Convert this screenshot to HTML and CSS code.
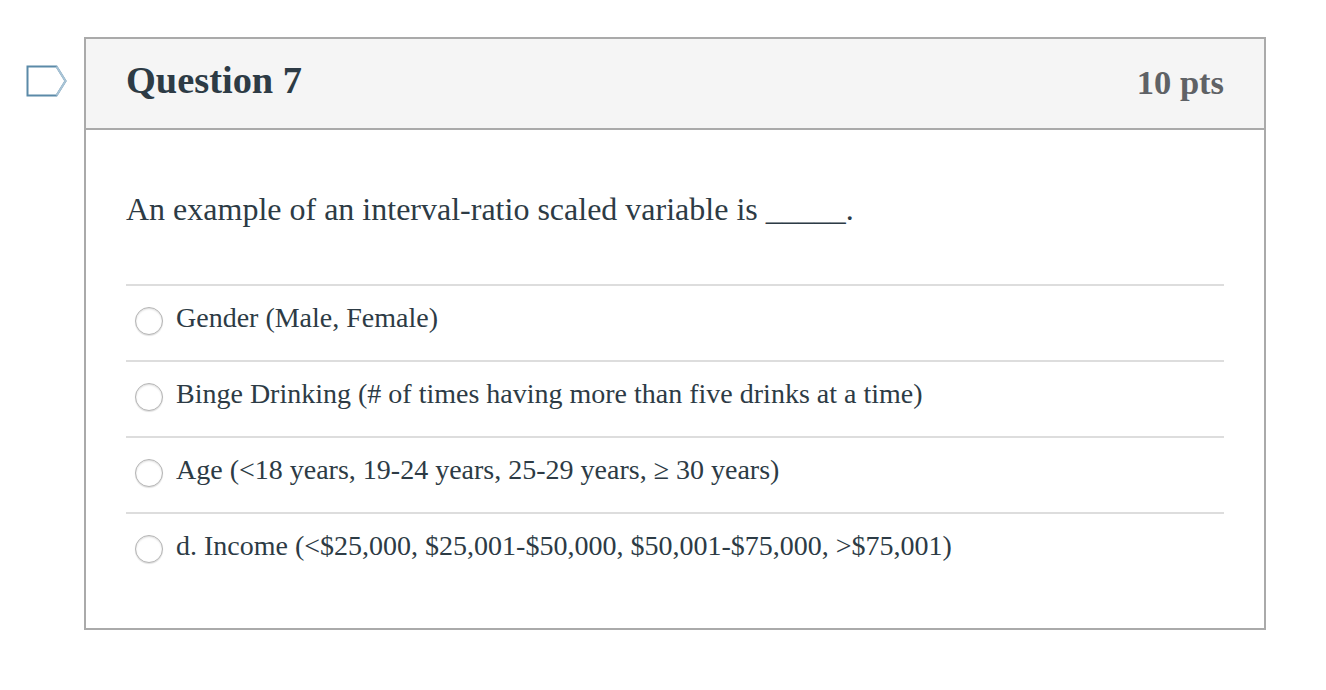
FILE: index.html
```html
<!DOCTYPE html>
<html lang="en">
<head>
    <meta charset="utf-8" />
    <meta name="viewport" content="width=device-width, initial-scale=1.0">
    <link rel="stylesheet" href="styles.css">
    <title>Question 7</title>
</head>
<body>
    <div class="question-row">
        <svg class="flag" width="42" height="34" viewBox="0 0 42 34">
            <path d="M1.5 2.5H30.5L39.5 17L30.5 31.5H1.5Z" fill="#fff" stroke="#5b8aa8" stroke-width="2"/>
            <path d="M30.5 2.5L39.5 17L30.5 31.5" fill="none" stroke="#a9c4d6" stroke-width="2"/>
        </svg>
        <div class="question">
            <div class="question-header">
                <h2>Question 7</h2>
                <span class="pts">10 pts</span>
            </div>
            <div class="question-body">
                <p class="prompt">An example of an interval-ratio scaled variable is _____.</p>
                <div class="answers">
                    <div class="answer"><span class="radio"></span><span>Gender (Male, Female)</span></div>
                    <div class="answer"><span class="radio"></span><span>Binge Drinking (# of times having more than five drinks at a time)</span></div>
                    <div class="answer"><span class="radio"></span><span>Age (&lt;18 years, 19-24 years, 25-29 years, ≥ 30 years)</span></div>
                    <div class="answer"><span class="radio"></span><span>d. Income (&lt;$25,000, $25,001-$50,000, $50,001-$75,000, &gt;$75,001)</span></div>
                </div>
            </div>
        </div>
    </div>
</body>
</html>
```

FILE: styles.css
```css
body {
    margin: 0;
    background-color: #fff;
    font-family: "Liberation Serif", "Times New Roman", serif;
    color: #2d3b45;
}

.question-row {
    display: flex;
    align-items: flex-start;
    padding: 37px 60px 0 26px;
}

.flag {
    margin-top: 27px;
    margin-right: 16px;
    flex: none;
}

.question {
    width: 1182px;
    height: 593px;
    box-sizing: border-box;
    border: 2px solid #aaa;
}

.question-header {
    display: flex;
    justify-content: space-between;
    align-items: center;
    height: 91px;
    box-sizing: border-box;
    padding: 0 40px;
    background-color: #f5f5f5;
    border-bottom: 2px solid #aaa;
}

.question-header h2 {
    margin: 0 0 8px;
    font-size: 38.4px;
    font-weight: bold;
}

.pts {
    margin-bottom: 2px;
    font-size: 34.5px;
    font-weight: bold;
    color: #5f6266;
}

.question-body {
    padding: 0 40px;
}

.prompt {
    margin: 0;
    padding-top: 59px;
    height: 95px;
    font-size: 32px;
    line-height: 40px;
}

.answer {
    display: flex;
    align-items: center;
    gap: 13px;
    height: 64px;
    padding: 0 0 10px 9px;
    border-top: 2px solid #ddd;
    font-size: 28px;
}

.radio {
    flex: none;
    width: 26px;
    height: 26px;
    margin-top: 6px;
    border: 1px solid #b5b5b5;
    border-radius: 50%;
    background-color: #fff;
    box-shadow: inset 0 1px 2px rgba(0, 0, 0, 0.15), 0 1px 1px rgba(0, 0, 0, 0.12);
}
```
